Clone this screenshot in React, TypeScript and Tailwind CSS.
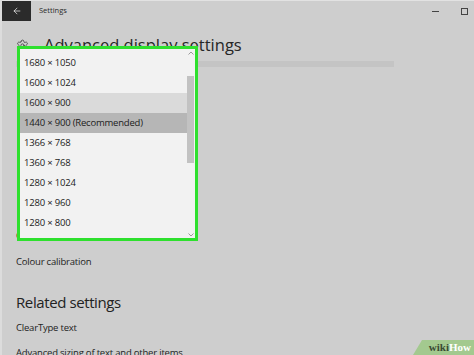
import { ArrowLeft, Settings } from 'lucide-react';

const RESOLUTIONS = [
  '1680 × 1050',
  '1600 × 1024',
  '1600 × 900',
  '1440 × 900 (Recommended)',
  '1366 × 768',
  '1360 × 768',
  '1280 × 1024',
  '1280 × 960',
  '1280 × 800',
];

function ResolutionList() {
  return (
    <div className="absolute left-[15px] top-[46px] w-[181px] h-[195px] border-[3px] border-[#2ee02e] bg-[#f2f2f2] flex">
      <div className="flex-1 pt-[4px]">
        {RESOLUTIONS.map((r, i) => (
          <div
            key={r}
            className={`h-[20px] flex items-center pl-[4px] text-[9.5px] tracking-[-0.2px] text-[#1c1c1c]
              ${i === 2 ? 'bg-[#dadada]' : ''}
              ${i === 3 ? 'bg-[#b6b6b6]' : ''}`}
          >
            {r}
          </div>
        ))}
      </div>
      <div className="relative w-[8px]">
        <svg className="absolute left-[1px] top-[2px]" width="6" height="4" viewBox="0 0 6 4">
          <path d="M0.5 3.5 L3 1 L5.5 3.5" fill="none" stroke="#9a9a9a" strokeWidth="1" />
        </svg>
        <div className="absolute left-0 top-[27px] w-[7px] h-[87px] bg-[#c2c2c2]" />
        <svg className="absolute left-[1px] bottom-[1px]" width="6" height="4" viewBox="0 0 6 4">
          <path d="M0.5 0.5 L3 3 L5.5 0.5" fill="none" stroke="#9a9a9a" strokeWidth="1" />
        </svg>
      </div>
    </div>
  );
}

export default function App() {
  return (
    <div className="relative w-[474px] h-[355px] overflow-hidden bg-[#cecece] border-l-[2px] border-[#dcdcdc] font-['Open_Sans',sans-serif]">
      <div className="flex h-[21px] items-center border-t border-[#e2e2e2]">
        <div className="w-[29px] h-full bg-[#2b2b2b] flex items-center justify-center">
          <ArrowLeft size={10} color="#ffffff" strokeWidth={1.6} />
        </div>
        <span className="ml-[8px] text-[7.5px] text-[#2a2a2a]">Settings</span>
        <div className="ml-auto flex items-center gap-[22px] mr-[6px]">
          <div className="w-[7px] h-px bg-[#444]" />
          <div className="w-[7px] h-[7px] border border-[#444]" />
        </div>
      </div>

      <div className="pl-[14px]">
        <div className="flex items-center mt-[13px] h-[22px]">
          <Settings size={13} color="#333" strokeWidth={1.4} />
          <h1 className="ml-[15px] text-[16.5px] leading-none text-[#262626]">Advanced display settings</h1>
        </div>
        <div className="mt-[5px] w-[378px] h-[6px] bg-[#c4c4c4]" />

        <div className="mt-[162px] text-[9.5px] leading-[14px] tracking-[-0.2px] text-[#222]">Colour management</div>
        <div className="mt-[12px] text-[9.5px] leading-[14px] tracking-[-0.2px] text-[#222]">Colour calibration</div>
        <div className="mt-[22px] text-[15px] leading-[22px] tracking-[-0.4px] text-[#222]">Related settings</div>
        <div className="mt-[8px] text-[9.5px] leading-[14px] tracking-[-0.2px] text-[#222]">ClearType text</div>
        <div className="mt-[11px] text-[9.5px] leading-[14px] tracking-[-0.2px] text-[#222]">Advanced sizing of text and other items</div>
      </div>

      <ResolutionList />

      <div className="absolute right-0 bottom-0 h-[15px] w-[61px] bg-[#a3c98f] [clip-path:polygon(9px_0,100%_0,100%_100%,0_100%)] flex items-center justify-end pr-[3px]">
        <span className="text-[11px] font-bold leading-none font-['Liberation_Serif',serif]">
          <span className="text-[#3a4a33]">wiki</span>
          <span className="text-white">How</span>
        </span>
      </div>
    </div>
  );
}
